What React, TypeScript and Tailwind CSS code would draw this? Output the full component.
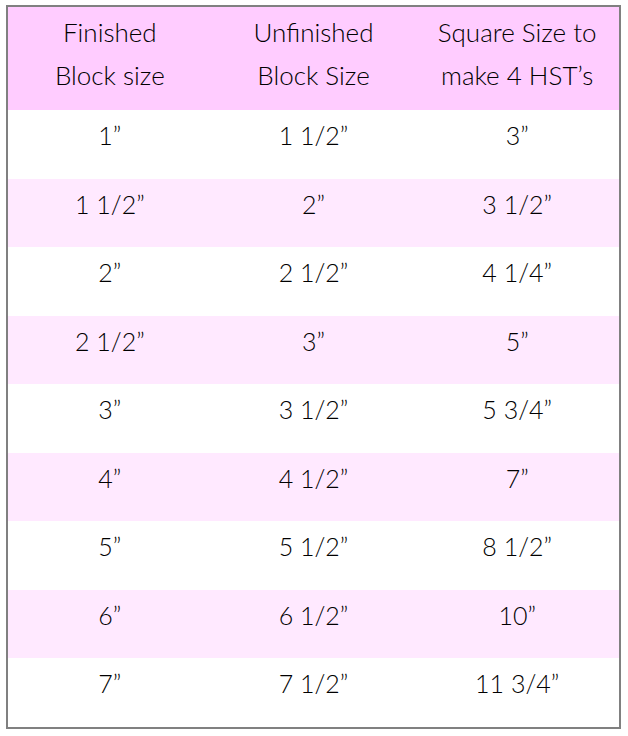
import React from "react";

const rows: [string, string, string][] = [
  ["1”", "1 1/2”", "3”"],
  ["1 1/2”", "2”", "3 1/2”"],
  ["2”", "2 1/2”", "4 1/4”"],
  ["2 1/2”", "3”", "5”"],
  ["3”", "3 1/2”", "5 3/4”"],
  ["4”", "4 1/2”", "7”"],
  ["5”", "5 1/2”", "8 1/2”"],
  ["6”", "6 1/2”", "10”"],
  ["7”", "7 1/2”", "11 3/4”"],
];

export default function App() {
  return (
    <div className="w-[628px] h-[736px] bg-white pt-[5px] pl-[6px]" style={{ fontFamily: "Lato, 'Open Sans', sans-serif" }}>
      <div className="w-[615px] border-2 border-[#808080] text-black font-light">
        <div className="grid grid-cols-3 h-[103px] bg-[#ffccff] pt-[4px] text-[26px] leading-[43px] text-center">
          <div>Finished<br />Block size</div>
          <div>Unfinished<br />Block Size</div>
          <div>Square Size to<br />make 4 HST’s</div>
        </div>
        {rows.map((r, i) => (
          <div
            key={i}
            className={`grid grid-cols-3 h-[68.5px] pt-[9px] text-[25px] leading-[32px] text-center ${i % 2 === 1 ? "bg-[#ffe9ff]" : "bg-white"}`}
          >
            <div>{r[0]}</div>
            <div>{r[1]}</div>
            <div>{r[2]}</div>
          </div>
        ))}
      </div>
    </div>
  );
}
